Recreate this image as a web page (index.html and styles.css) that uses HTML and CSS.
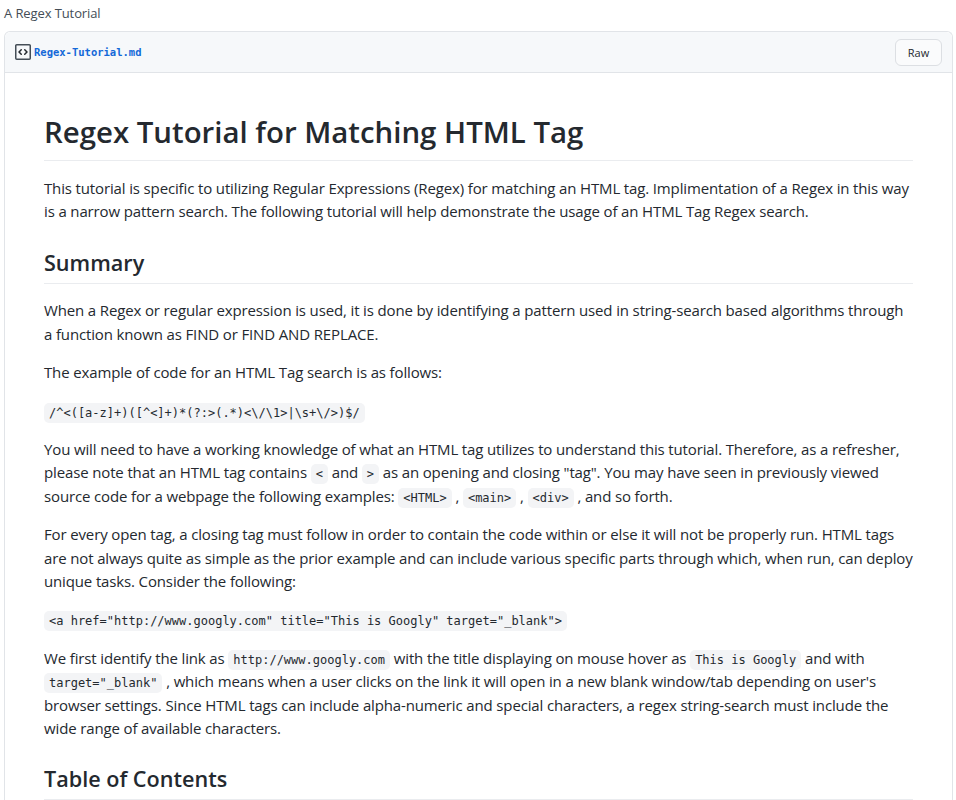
FILE: index.html
```html
<!DOCTYPE html>
<html lang="en">
<head>
<meta charset="utf-8">
<title>A Regex Tutorial</title>
<link rel="stylesheet" href="styles.css">
</head>
<body>
<div class="gist-desc">A Regex Tutorial</div>
<div class="file-box">
  <div class="file-header">
    <div class="file-name">
      <svg class="file-icon" width="16" height="16" viewBox="0 0 16 16" aria-hidden="true"><path fill="#444d56" d="M0 1.75C0 .784.784 0 1.75 0h12.5C15.216 0 16 .784 16 1.75v12.5A1.75 1.75 0 0 1 14.25 16H1.75A1.75 1.75 0 0 1 0 14.25Zm1.75-.25a.25.25 0 0 0-.25.25v12.5c0 .138.112.25.25.25h12.5a.25.25 0 0 0 .25-.25V1.75a.25.25 0 0 0-.25-.25Z"/><path fill="#24292f" d="M9.22 5.22a.75.75 0 0 1 1.06 0l2.25 2.25a.75.75 0 0 1 0 1.06l-2.25 2.25a.75.75 0 1 1-1.06-1.06L10.94 8 9.22 6.28a.75.75 0 0 1 0-1.06Zm-2.44 0a.75.75 0 0 1 0 1.06L5.06 8l1.72 1.72a.75.75 0 1 1-1.06 1.06L3.47 8.53a.75.75 0 0 1 0-1.06l2.25-2.25a.75.75 0 0 1 1.06 0Z"/></svg>
      <a class="file-link" href="#">Regex-Tutorial.md</a>
    </div>
    <a class="raw-btn" href="#">Raw</a>
  </div>
  <article class="markdown">
    <h1>Regex Tutorial for Matching HTML Tag</h1>
    <p>This tutorial is specific to utilizing Regular Expressions (Regex) for matching an HTML tag. Implimentation of a Regex in this way<br>is a narrow pattern search. The following tutorial will help demonstrate the usage of an HTML Tag Regex search.</p>
    <h2>Summary</h2>
    <p>When a Regex or regular expression is used, it is done by identifying a pattern used in string-search based algorithms through<br>a function known as FIND or FIND AND REPLACE.</p>
    <p>The example of code for an HTML Tag search is as follows:</p>
    <p><code>/^&lt;([a-z]+)([^&lt;]+)*(?:&gt;(.*)&lt;\/\1&gt;|\s+\/&gt;)$/</code></p>
    <p>You will need to have a working knowledge of what an HTML tag utilizes to understand this tutorial. Therefore, as a refresher,<br>please note that an HTML tag contains <code>&lt;</code> and <code>&gt;</code> as an opening and closing "tag". You may have seen in previously viewed<br>source code for a webpage the following examples: <code>&lt;HTML&gt;</code> , <code>&lt;main&gt;</code> , <code>&lt;div&gt;</code> , and so forth.</p>
    <p>For every open tag, a closing tag must follow in order to contain the code within or else it will not be properly run. HTML tags<br>are not always quite as simple as the prior example and can include various specific parts through which, when run, can deploy<br>unique tasks. Consider the following:</p>
    <p><code>&lt;a href="http://www.googly.com" title="This is Googly" target="_blank"&gt;</code></p>
    <p>We first identify the link as <code>http://www.googly.com</code> with the title displaying on mouse hover as <code>This is Googly</code> and with<br><code>target="_blank"</code> , which means when a user clicks on the link it will open in a new blank window/tab depending on user's<br>browser settings. Since HTML tags can include alpha-numeric and special characters, a regex string-search must include the<br>wide range of available characters.</p>
    <h2>Table of Contents</h2>
  </article>
</div>
</body>
</html>
```
FILE: styles.css
```css
html, body { height: 800px; overflow: hidden; }
body {
  margin: 0;
  padding: 0 3px 0 4px;
  background: #fff;
  color: #24292f;
  font-family: "Open Sans", "Noto Sans", sans-serif;
  font-size: 14px;
}
.gist-desc {
  height: 31px;
  padding-top: 5px;
  box-sizing: border-box;
  font-size: 13px;
  line-height: 16px;
  letter-spacing: -0.1px;
  color: #444d56;
}
.file-box {
  border: 1px solid #e1e4e8;
  border-bottom: 0;
  border-radius: 6px 6px 0 0;
}
.file-header {
  height: 41px;
  box-sizing: border-box;
  display: flex;
  align-items: center;
  justify-content: space-between;
  padding: 0 10px;
  background: #f6f8fa;
  border-bottom: 1px solid #e1e4e8;
  border-radius: 6px 6px 0 0;
}
.file-name { display: flex; align-items: center; gap: 3px; margin-top: -1px; }
.file-icon { display: block; width: 16px; height: 16px; }
.file-link {
  font-family: "DejaVu Sans Mono", "Liberation Mono", monospace;
  font-size: 10.5px;
  font-weight: 700;
  color: #1469d8;
  text-decoration: none;
}
.raw-btn {
  display: block;
  width: 47px;
  height: 27px;
  box-sizing: border-box;
  border: 1px solid #dcdfe3;
  border-radius: 6px;
  background: #fafbfc;
  color: #24292f;
  font-size: 11px;
  line-height: 26px;
  text-align: center;
  text-decoration: none;
}
.markdown {
  padding: 40px 39px 0;
  font-size: 15px;
  line-height: 23.4px;
  color: #24292f;
  letter-spacing: -0.14px;
}
.markdown h1 {
  margin: 0 0 16px;
  padding-bottom: 9px;
  border-bottom: 1px solid #eaecef;
  font-size: 29.4px;
  line-height: 38px;
  font-weight: 600;
  letter-spacing: 0;
}
.markdown h2 {
  margin: 25px 0 15.5px;
  padding-bottom: 7px;
  border-bottom: 1px solid #eaecef;
  font-size: 21.6px;
  line-height: 27px;
  font-weight: 600;
  letter-spacing: 0;
}
.markdown p { margin: 0 0 15px; white-space: nowrap; }
.markdown code {
  font-family: "DejaVu Sans Mono", "Liberation Mono", monospace;
  font-size: 12px;
  line-height: 1;
  letter-spacing: 0;
  padding: 3px 5px;
  background: #f3f4f6;
  border-radius: 5px;
}
```
